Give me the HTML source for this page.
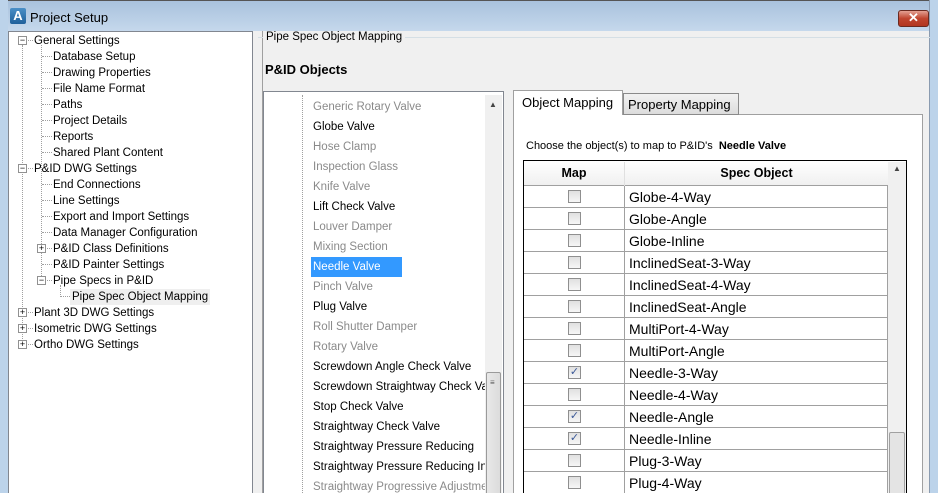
<!DOCTYPE html>
<html style="overflow:hidden;width:938px;height:493px"><head><meta charset="utf-8"><style>
*{margin:0;padding:0;box-sizing:border-box}
body{width:938px;height:493px;overflow:hidden;position:relative;background:#f0f0f0;font-family:"Liberation Sans",sans-serif;font-size:12px;color:#000}
.a{position:absolute;white-space:nowrap}
.t{position:absolute;white-space:nowrap;line-height:16px;font-size:11.5px;top:0}
.l{position:absolute;white-space:nowrap;line-height:20px;font-size:11.5px}
.g{color:#8a8a8a}
.box{position:absolute;width:9px;height:9px;border:1px solid #919191;background:#fff;font-size:9px;line-height:7px;text-align:center;color:#000}
.dv{position:absolute;border-left:1px dotted #a0a0a0}
.dh{position:absolute;border-top:1px dotted #a0a0a0;height:1px}
.cb{position:absolute;width:13px;height:13px;border:1px solid #8f8f8f;background:linear-gradient(#e0e0e0,#f6f6f6)}
.row{position:absolute;left:524px;width:364px;height:22px;border-bottom:1px solid #a0a0a0;font-size:14px;line-height:23px}
</style></head><body>
<div class="a" style="left:0;top:0;width:938px;height:31px;background:linear-gradient(#a9c2dd,#c5d8ec);border-top:1px solid #555"></div>
<div class="a" style="left:0;top:0;width:8px;height:493px;background:#bcd3ea"></div>
<div class="a" style="left:929px;top:0;width:9px;height:493px;background:#bcd3ea;border-left:1px solid #8a9bb0"></div>
<div class="a" style="left:10px;top:8px;width:16px;height:16px;background:linear-gradient(#4a8fc7,#1f5f9a);color:#fff;font-weight:bold;font-size:13px;line-height:16px;text-align:center;border-radius:2px">A</div>
<div class="a" style="left:30px;top:10px;font-size:13px">Project Setup</div>
<div class="a" style="left:898px;top:10px;width:31px;height:17px;border:1px solid #6b2a20;border-radius:3px;background:linear-gradient(#e4a193,#c0452f 50%,#b23620);color:#fff;font-weight:bold;font-size:13px;line-height:14px;text-align:center">✕</div>
<div class="a" style="left:8px;top:31px;width:245px;height:470px;background:#fff;border:1px solid #828790"></div>
<div class="a" style="left:262px;top:31px;width:1px;height:462px;background:#a0a0a0"></div>
<div class="dv" style="left:22px;top:45px;height:300px"></div>
<div class="dv" style="left:41px;top:45px;height:235px"></div>
<div class="dv" style="left:60px;top:285px;height:12px"></div>
<div class="dh" style="left:28px;top:40px;width:5px"></div>
<div class="dh" style="left:28px;top:168px;width:5px"></div>
<div class="dh" style="left:28px;top:312px;width:5px"></div>
<div class="dh" style="left:28px;top:328px;width:5px"></div>
<div class="dh" style="left:28px;top:344px;width:5px"></div>
<div class="dh" style="left:42px;top:56px;width:10px"></div>
<div class="dh" style="left:42px;top:72px;width:10px"></div>
<div class="dh" style="left:42px;top:88px;width:10px"></div>
<div class="dh" style="left:42px;top:104px;width:10px"></div>
<div class="dh" style="left:42px;top:120px;width:10px"></div>
<div class="dh" style="left:42px;top:136px;width:10px"></div>
<div class="dh" style="left:42px;top:152px;width:10px"></div>
<div class="dh" style="left:42px;top:184px;width:10px"></div>
<div class="dh" style="left:42px;top:200px;width:10px"></div>
<div class="dh" style="left:42px;top:216px;width:10px"></div>
<div class="dh" style="left:42px;top:232px;width:10px"></div>
<div class="dh" style="left:47px;top:248px;width:5px"></div>
<div class="dh" style="left:42px;top:264px;width:10px"></div>
<div class="dh" style="left:47px;top:280px;width:5px"></div>
<div class="dh" style="left:61px;top:296px;width:9px"></div>
<div class="box" style="left:18px;top:36px">−</div>
<div class="box" style="left:18px;top:164px">−</div>
<div class="box" style="left:37px;top:244px">+</div>
<div class="box" style="left:37px;top:276px">−</div>
<div class="box" style="left:18px;top:308px">+</div>
<div class="box" style="left:18px;top:324px">+</div>
<div class="box" style="left:18px;top:340px">+</div>
<div class="t" style="left:34px;top:33px">General Settings</div>
<div class="t" style="left:53px;top:49px">Database Setup</div>
<div class="t" style="left:53px;top:65px">Drawing Properties</div>
<div class="t" style="left:53px;top:81px">File Name Format</div>
<div class="t" style="left:53px;top:97px">Paths</div>
<div class="t" style="left:53px;top:113px">Project Details</div>
<div class="t" style="left:53px;top:129px">Reports</div>
<div class="t" style="left:53px;top:145px">Shared Plant Content</div>
<div class="t" style="left:34px;top:161px">P&amp;ID DWG Settings</div>
<div class="t" style="left:53px;top:177px">End Connections</div>
<div class="t" style="left:53px;top:193px">Line Settings</div>
<div class="t" style="left:53px;top:209px">Export and Import Settings</div>
<div class="t" style="left:53px;top:225px">Data Manager Configuration</div>
<div class="t" style="left:53px;top:241px">P&amp;ID Class Definitions</div>
<div class="t" style="left:53px;top:257px">P&amp;ID Painter Settings</div>
<div class="t" style="left:53px;top:273px">Pipe Specs in P&amp;ID</div>
<div class="t" style="left:70px;top:289px;background:#efefef;padding:0 2px">Pipe Spec Object Mapping</div>
<div class="t" style="left:34px;top:305px">Plant 3D DWG Settings</div>
<div class="t" style="left:34px;top:321px">Isometric DWG Settings</div>
<div class="t" style="left:34px;top:337px">Ortho DWG Settings</div>
<div class="a" style="left:258px;top:37px;width:672px;height:1px;background:#d5dfe5"></div>
<div class="a" style="left:263px;top:31px;background:#f0f0f0;padding:0 3px;font-size:11.5px">Pipe Spec Object Mapping</div>
<div class="a" style="left:265px;top:62px;font-weight:bold;font-size:13px">P&amp;ID Objects</div>
<div class="a" style="left:263px;top:91px;width:241px;height:410px;background:#fff;border:1px solid #828790"></div>
<div class="a" style="left:485px;top:95px;width:17px;height:400px;background:#f0f0f0"></div>
<div class="a" style="left:489px;top:100px;font-size:8px;color:#444">▲</div>
<div class="a" style="left:486px;top:372px;width:15px;height:125px;background:linear-gradient(90deg,#e8e8e8,#dcdcdc);border:1px solid #9a9a9a;border-radius:2px"></div>
<div class="a" style="left:490px;top:378px;font-size:8px;color:#555">≡</div>
<div class="dv" style="left:302px;top:95px;height:400px"></div>
<div class="a" style="left:311px;top:257px;width:91px;height:20px;background:#3399ff"></div>
<div class="l g" style="left:313px;top:97px">Generic Rotary Valve</div>
<div class="l" style="left:313px;top:117px">Globe Valve</div>
<div class="l g" style="left:313px;top:137px">Hose Clamp</div>
<div class="l g" style="left:313px;top:157px">Inspection Glass</div>
<div class="l g" style="left:313px;top:177px">Knife Valve</div>
<div class="l" style="left:313px;top:197px">Lift Check Valve</div>
<div class="l g" style="left:313px;top:217px">Louver Damper</div>
<div class="l g" style="left:313px;top:237px">Mixing Section</div>
<div class="l" style="left:313px;top:257px;color:#fff">Needle Valve</div>
<div class="l g" style="left:313px;top:277px">Pinch Valve</div>
<div class="l" style="left:313px;top:297px">Plug Valve</div>
<div class="l g" style="left:313px;top:317px">Roll Shutter Damper</div>
<div class="l g" style="left:313px;top:337px">Rotary Valve</div>
<div class="l" style="left:313px;top:357px">Screwdown Angle Check Valve</div>
<div class="l" style="left:313px;top:377px;width:172px;overflow:hidden">Screwdown Straightway Check Valve</div>
<div class="l" style="left:313px;top:397px">Stop Check Valve</div>
<div class="l" style="left:313px;top:417px">Straightway Check Valve</div>
<div class="l" style="left:313px;top:437px">Straightway Pressure Reducing</div>
<div class="l" style="left:313px;top:457px;width:172px;overflow:hidden">Straightway Pressure Reducing Inline</div>
<div class="l g" style="left:313px;top:477px;width:172px;height:16px;overflow:hidden">Straightway Progressive Adjustment</div>
<div class="a" style="left:513px;top:114px;width:410px;height:390px;background:#fff;border:1px solid #a0a0a0"></div>
<div class="a" style="left:623px;top:93px;width:116px;height:22px;background:linear-gradient(#f2f2f2,#dcdcdc);border:1px solid #8a8a8a;font-size:13px;line-height:22px;padding-left:4px">Property Mapping</div>
<div class="a" style="left:513px;top:90px;width:110px;height:25px;background:#fff;border:1px solid #a0a0a0;border-bottom:none;font-size:13px;line-height:24px;padding-left:8px">Object Mapping</div>
<div class="a" style="left:526px;top:140px;font-size:11px">Choose the object(s) to map to P&amp;ID's &nbsp;<b>Needle Valve</b></div>
<div class="a" style="left:523px;top:160px;width:384px;height:340px;background:#fff;border:1px solid #000"></div>
<div class="a" style="left:888px;top:162px;width:18px;height:335px;background:#f0f0f0"></div>
<div class="a" style="left:893px;top:164px;font-size:8px;color:#444">▲</div>
<div class="a" style="left:889px;top:432px;width:16px;height:70px;background:#e4e4e4;border:1px solid #a0a0a0;border-radius:2px"></div>
<div class="a" style="left:524px;top:161px;width:364px;height:25px;background:linear-gradient(#fff,#f0f0f0);border-bottom:1px solid #a0a0a0"></div>
<div class="a" style="left:624px;top:162px;width:1px;height:24px;background:#e0e0e0"></div>
<div class="a" style="left:524px;top:166px;width:100px;text-align:center;font-weight:bold;font-size:12.5px">Map</div>
<div class="a" style="left:625px;top:166px;width:263px;text-align:center;font-weight:bold;font-size:12.5px">Spec Object</div>
<div class="a" style="left:624px;top:186px;width:1px;height:307px;background:#a0a0a0"></div>
<div class="a" style="left:887px;top:186px;width:1px;height:307px;background:#a0a0a0"></div>
<div class="row" style="top:186px"><div class="cb" style="left:44px;top:4px"></div><span class="a" style="left:105px">Globe-4-Way</span></div>
<div class="row" style="top:208px"><div class="cb" style="left:44px;top:4px"></div><span class="a" style="left:105px">Globe-Angle</span></div>
<div class="row" style="top:230px"><div class="cb" style="left:44px;top:4px"></div><span class="a" style="left:105px">Globe-Inline</span></div>
<div class="row" style="top:252px"><div class="cb" style="left:44px;top:4px"></div><span class="a" style="left:105px">InclinedSeat-3-Way</span></div>
<div class="row" style="top:274px"><div class="cb" style="left:44px;top:4px"></div><span class="a" style="left:105px">InclinedSeat-4-Way</span></div>
<div class="row" style="top:296px"><div class="cb" style="left:44px;top:4px"></div><span class="a" style="left:105px">InclinedSeat-Angle</span></div>
<div class="row" style="top:318px"><div class="cb" style="left:44px;top:4px"></div><span class="a" style="left:105px">MultiPort-4-Way</span></div>
<div class="row" style="top:340px"><div class="cb" style="left:44px;top:4px"></div><span class="a" style="left:105px">MultiPort-Angle</span></div>
<div class="row" style="top:362px"><div class="cb" style="left:44px;top:4px;font-size:11px;line-height:11px;color:#3b5998;text-align:center">✓</div><span class="a" style="left:105px">Needle-3-Way</span></div>
<div class="row" style="top:384px"><div class="cb" style="left:44px;top:4px"></div><span class="a" style="left:105px">Needle-4-Way</span></div>
<div class="row" style="top:406px"><div class="cb" style="left:44px;top:4px;font-size:11px;line-height:11px;color:#3b5998;text-align:center">✓</div><span class="a" style="left:105px">Needle-Angle</span></div>
<div class="row" style="top:428px"><div class="cb" style="left:44px;top:4px;font-size:11px;line-height:11px;color:#3b5998;text-align:center">✓</div><span class="a" style="left:105px">Needle-Inline</span></div>
<div class="row" style="top:450px"><div class="cb" style="left:44px;top:4px"></div><span class="a" style="left:105px">Plug-3-Way</span></div>
<div class="row" style="top:472px;height:21px;border-bottom:none"><div class="cb" style="left:44px;top:4px"></div><span class="a" style="left:105px">Plug-4-Way</span></div>
</body></html>
